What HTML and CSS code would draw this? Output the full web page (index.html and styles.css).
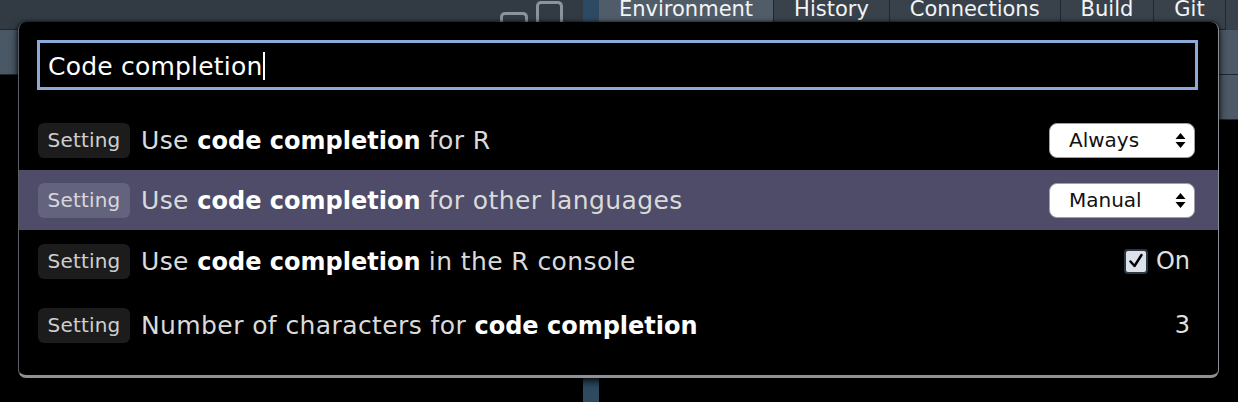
FILE: index.html
```html
<!DOCTYPE html>
<html>
<head>
<meta charset="utf-8">
<link rel="stylesheet" href="styles.css">
</head>
<body>
<div class="ide">
  <div class="pane pane-left">
    <div class="toolbar">
      <span class="pane-btn pane-btn-min"></span>
      <span class="pane-btn pane-btn-max"></span>
    </div>
    <div class="strip strip-left"></div>
  </div>
  <div class="splitter"></div>
  <div class="pane pane-right">
    <div class="tabs">
      <span class="tab tab-active">Environment</span>
      <span class="tab">History</span>
      <span class="tab">Connections</span>
      <span class="tab">Build</span>
      <span class="tab">Git</span>
      <span class="tab tab-rest"></span>
    </div>
    <div class="strip"></div>
    <div class="strip"></div>
  </div>
</div>

<div class="modal">
  <div class="search">
    <span class="search-text">Code completion</span><span class="caret"></span>
  </div>
  <div class="results">
    <div class="row">
      <span class="badge">Setting</span>
      <span class="label">Use <b>code completion</b> for R</span>
      <span class="select">Always<svg class="arrows" width="11" height="17" viewBox="0 0 11 17"><path d="M5.5 1 L10.5 7 H0.5 Z M5.5 16 L10.5 10 H0.5 Z" fill="#000"/></svg></span>
    </div>
    <div class="row row-selected">
      <span class="badge">Setting</span>
      <span class="label">Use <b>code completion</b> for other languages</span>
      <span class="select">Manual<svg class="arrows" width="11" height="17" viewBox="0 0 11 17"><path d="M5.5 1 L10.5 7 H0.5 Z M5.5 16 L10.5 10 H0.5 Z" fill="#000"/></svg></span>
    </div>
    <div class="row row-tall">
      <span class="badge">Setting</span>
      <span class="label">Use <b>code completion</b> in the R console</span>
      <span class="check"><span class="box"><svg width="18" height="18" viewBox="0 0 18 18"><path d="M3.5 9.5 L7.5 14 L14.5 3" fill="none" stroke="#000" stroke-width="2.4" stroke-linecap="round" stroke-linejoin="round"/></svg></span>On</span>
    </div>
    <div class="row row-last">
      <span class="badge">Setting</span>
      <span class="label">Number of characters for <b>code completion</b></span>
      <span class="value">3</span>
    </div>
  </div>
</div>
</body>
</html>
```
FILE: styles.css
```css
html, body {
  margin: 0;
  padding: 0;
}
body {
  width: 1238px;
  height: 402px;
  overflow: hidden;
  background: #000;
  font-family: "DejaVu Sans", "Liberation Sans", sans-serif;
  position: relative;
}

/* ---------- IDE background ---------- */
.ide {
  display: flex;
  height: 402px;
}
.pane {
  display: flex;
  flex-direction: column;
}
.pane-left {
  width: 583px;
  flex: none;
}
.toolbar {
  height: 30px;
  background: #323b44;
  border-bottom: 1px solid #1b2836;
  display: flex;
  justify-content: flex-end;
  align-items: flex-start;
  gap: 8px;
  padding-right: 20px;
  box-sizing: border-box;
}
.pane-btn {
  display: block;
  width: 28px;
  border: 3px solid #8b949d;
  border-bottom: none;
  border-radius: 5px 5px 0 0;
  box-sizing: border-box;
  height: 30px;
}
.pane-btn-min {
  margin-top: 12px;
}
.pane-btn-max {
  margin-top: 1px;
  width: 27px;
}
.strip {
  height: 45px;
  background: #4d5966;
  border-bottom: 1px solid #1b2836;
  box-sizing: border-box;
}
.strip-left {
  background: #4a5866;
}
.splitter {
  width: 16px;
  flex: none;
  background: #2e4a63;
}
.pane-right {
  flex: 1;
  min-width: 0;
  overflow: hidden;
}
.tabs {
  height: 30px;
  display: flex;
  background: #39424b;
  border-bottom: 1px solid #1b2836;
  box-sizing: border-box;
}
.tab {
  color: #f2f4f6;
  font-size: 21px;
  line-height: 19px;
  height: 30px;
  padding: 0 20px;
  border-right: 1px solid #1b2836;
  box-sizing: border-box;
  white-space: nowrap;
  flex: none;
}
.tab-active {
  background: #505c68;
}
.tab-rest {
  flex: 1;
  border-right: none;
  background: #39424b;
}

/* ---------- Modal ---------- */
.modal {
  position: absolute;
  left: 18px;
  top: 22px;
  width: 1201px;
  height: 356px;
  box-sizing: border-box;
  background: #000;
  border-radius: 8px;
  border-left: 1px solid #5a5f66;
  border-right: 1px solid #8a9096;
  border-bottom: 3px solid #8e9296;
  box-shadow: 0 3px 8px rgba(0, 0, 0, 0.9), 0 0 3px rgba(0, 0, 0, 0.7);
  padding-top: 18px;
}
.search {
  margin: 0 20px 0 18px;
  height: 50px;
  border: 3px solid #8ba9d9;
  box-sizing: border-box;
  display: flex;
  align-items: center;
  padding: 2px 0 0 8px;
}
.search-text {
  color: #fff;
  font-size: 25px;
  letter-spacing: 0.2px;
}
.caret {
  display: block;
  width: 2px;
  height: 28px;
  background: #fff;
  margin-left: 1px;
}
.results {
  margin-top: 20px;
}
.row {
  height: 60px;
  display: flex;
  align-items: center;
  padding: 0 23px 0 19px;
}
.row-tall {
  height: 62px;
}
.row-last {
  height: 66px;
}
.row-selected {
  background: #4e4c68;
}
.badge {
  width: 92px;
  height: 35px;
  border-radius: 6px;
  background: #1c1c1c;
  color: #cfcfcf;
  font-size: 20px;
  letter-spacing: 0.2px;
  display: flex;
  align-items: center;
  justify-content: center;
  flex: none;
}
.row-selected .badge {
  background: #64637d;
  color: #d8d8de;
}
.label {
  margin-left: 11px;
  flex: 1;
  font-size: 25px;
  letter-spacing: 0.4px;
  color: #dadada;
  white-space: nowrap;
}
.label b {
  color: #fff;
  font-weight: bold;
  font-size: 24px;
  letter-spacing: 0;
}
.select {
  width: 146px;
  height: 35px;
  box-sizing: border-box;
  background: #fff;
  border: 1.5px solid #a0a0a0;
  border-radius: 8px;
  color: #111;
  font-size: 20px;
  display: flex;
  align-items: center;
  padding: 0 8px 0 19px;
}
.arrows {
  margin-left: auto;
}
.check {
  display: flex;
  align-items: center;
  gap: 8px;
  color: #e0e0e0;
  font-size: 24px;
  margin-right: 5px;
}
.box {
  width: 24px;
  height: 25px;
  box-sizing: border-box;
  border: 2px solid #2b3947;
  border-radius: 4px;
  background: #dde2ea;
  display: flex;
  align-items: center;
  justify-content: center;
}
.value {
  color: #e0e0e0;
  font-size: 24px;
  margin-right: 5px;
}
```
